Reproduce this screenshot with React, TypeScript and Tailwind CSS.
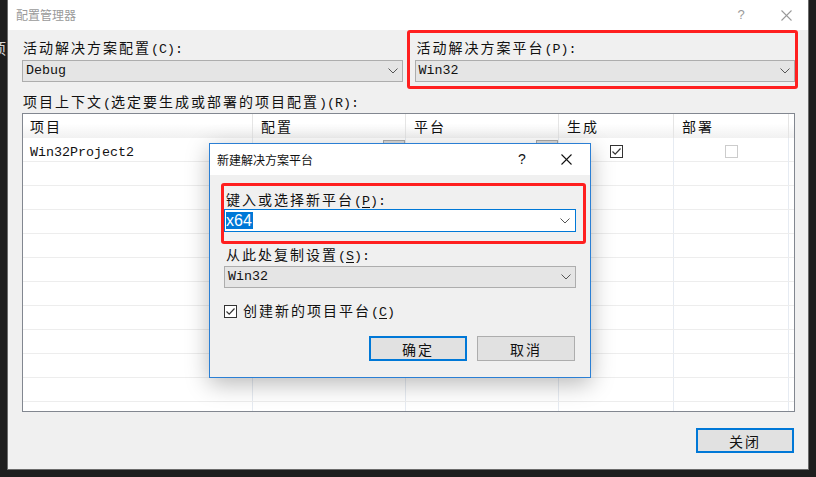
import React from "react";

const C = ({ children }: { children: React.ReactNode }) => (
  <span className="font-['Noto_Sans_CJK_SC',sans-serif] text-[14px] tracking-[2px]">{children}</span>
);
const A = ({ children, u }: { children: React.ReactNode; u?: boolean }) => (
  <span className={u ? "font-['Liberation_Mono',monospace] text-[13.33px] underline underline-offset-2" : "font-['Liberation_Mono',monospace] text-[13.33px]"}>
    {children}
  </span>
);

const Chevron = ({ color = "#555" }: { color?: string }) => (
  <svg width="10" height="6" viewBox="0 0 10 6" className="shrink-0">
    <polyline points="0.5,0.5 5,5 9.5,0.5" fill="none" stroke={color} strokeWidth="1" />
  </svg>
);

const XIcon = ({ color }: { color: string }) => (
  <svg width="11" height="11" viewBox="0 0 11 11">
    <line x1="0.5" y1="0.5" x2="10.5" y2="10.5" stroke={color} strokeWidth="1.1" />
    <line x1="10.5" y1="0.5" x2="0.5" y2="10.5" stroke={color} strokeWidth="1.1" />
  </svg>
);

const CheckBox = ({ checked, disabled }: { checked?: boolean; disabled?: boolean }) => (
  <div
    className={
      disabled
        ? "w-[13px] h-[13px] border border-[#cccccc] bg-white"
        : "w-[13px] h-[13px] border border-[#333333] bg-white flex items-center justify-center"
    }
  >
    {checked && (
      <svg width="11" height="11" viewBox="0 0 11 11">
        <polyline points="1.5,5.5 4.2,8.2 9.5,2.5" fill="none" stroke="#333" strokeWidth="1.2" />
      </svg>
    )}
  </div>
);

const Combo = ({ text }: { text: string }) => (
  <div className="h-[22px] bg-[#e5e5e5] border border-[#adadad] flex items-center pl-[3px] pr-[4px] leading-[20px] text-[#111]">
    <A>{text}</A>
    <div className="ml-auto">
      <Chevron />
    </div>
  </div>
);

const cols = "grid grid-cols-[230px_153px_153px_115px_115px]";

export default function App() {
  const emptyRows = Array.from({ length: 11 });
  return (
    <div className="relative w-[816px] h-[477px] bg-[#1e1e1e] overflow-hidden">
      <span className="absolute left-[-9px] top-[37px] text-[15px] text-[#d8d8d8] font-['Noto_Sans_CJK_SC',sans-serif]">项</span>

      {/* Main dialog */}
      <div className="absolute left-[7px] top-0 w-[802px] h-[470px] bg-[#f0f0f0] border-x border-b border-[#6b6b6b] flex flex-col">
        <div className="h-[30px] bg-white flex items-center pl-[8px] pr-[7px] shrink-0">
          <span className="font-['Noto_Sans_CJK_SC',sans-serif] text-[12px] text-[#9a9a9a]">配置管理器</span>
          <div className="ml-auto w-[30px] flex justify-center text-[13px] text-[#9a9a9a] font-['Liberation_Sans',sans-serif]">?</div>
          <div className="ml-[15px] w-[30px] flex justify-center">
            <XIcon color="#9a9a9a" />
          </div>
        </div>

        <div className="relative flex-1 pl-[14px] pr-[13px] pt-[7px] flex flex-col text-[#111]">
          <div className="grid grid-cols-2 gap-x-[12px]">
            <div>
              <div className="h-[20px] leading-[20px] pl-[1px]">
                <C>活动解决方案配置</C>
                <A>(C):</A>
              </div>
              <div className="mt-[3px]">
                <Combo text="Debug" />
              </div>
            </div>
            <div>
              <div className="h-[20px] leading-[20px] pl-[2px]">
                <C>活动解决方案平台</C>
                <A>(P):</A>
              </div>
              <div className="mt-[3px]">
                <Combo text="Win32" />
              </div>
            </div>
          </div>

          <div className="mt-[9px] h-[20px] leading-[20px] pl-[1px]">
            <C>项目上下文</C>
            <A>(</A>
            <C>选定要生成或部署的项目配置</C>
            <A>)(R):</A>
          </div>

          <div className="mt-[2px] h-[299px] bg-white border border-[#828790] overflow-hidden">
            <div className={cols + " h-[24px] bg-linear-to-b from-white from-40% to-[#f1f1f1]"}>
              {["项目", "配置", "平台", "生成", "部署"].map((h, i) => (
                <div
                  key={h}
                  className={
                    i === 0
                      ? "border-r border-[#e5e5e5] pl-[7px] leading-[24px]"
                      : "border-r border-[#e5e5e5] pl-[8px] leading-[24px]"
                  }
                >
                  <C>{h}</C>
                </div>
              ))}
            </div>
            <div className={cols + " h-[24px] border-b border-[#ededed]"}>
              <div className="border-r border-[#e6ebf2] pl-[7px] leading-[24px]">
                <A>Win32Project2</A>
              </div>
              <div className="relative border-r border-[#e6ebf2]">
                <div className="absolute right-0 top-[2px] w-[22px] h-[20px] bg-[#dadada] border border-[#a8a8a8]" />
              </div>
              <div className="relative border-r border-[#e6ebf2]">
                <div className="absolute right-0 top-[2px] w-[22px] h-[20px] bg-[#dadada] border border-[#a8a8a8]" />
              </div>
              <div className="border-r border-[#e6ebf2] flex items-center justify-center">
                <CheckBox checked />
              </div>
              <div className="border-r border-[#e6ebf2] flex items-center justify-center">
                <CheckBox disabled />
              </div>
            </div>
            {emptyRows.map((_, r) => (
              <div key={r} className={cols + " h-[24px] border-b border-[#ededed]"}>
                <div className="border-r border-[#e6ebf2]" />
                <div className="border-r border-[#e6ebf2]" />
                <div className="border-r border-[#e6ebf2]" />
                <div className="border-r border-[#e6ebf2]" />
                <div className="border-r border-[#e6ebf2]" />
              </div>
            ))}
          </div>

          <div className="mt-[16px] flex justify-end pr-[1px]">
            <button className="w-[98px] h-[25px] bg-[#e1e1e1] border-2 border-[#0078d7] flex items-center justify-center leading-[20px] text-[#111]">
              <C>关闭</C>
            </button>
          </div>

          <div className="absolute left-[399px] top-0 w-[391px] h-[59px] border-[3px] border-[#ff1f1f] rounded-[3px]" />
        </div>
      </div>

      {/* Sub dialog */}
      <div className="absolute left-[209px] top-[143px] w-[382px] h-[235px] bg-[#f0f0f0] border border-[#2b7fd4] shadow-[0_6px_22px_rgba(0,0,0,0.28)] flex flex-col">
        <div className="h-[31px] bg-white flex items-center pl-[7px] pr-[9px] shrink-0">
          <span className="font-['Noto_Sans_CJK_SC',sans-serif] text-[12px] text-[#111]">新建解决方案平台</span>
          <div className="ml-auto w-[30px] flex justify-center text-[14px] text-[#111] font-['Liberation_Sans',sans-serif]">?</div>
          <div className="ml-[14px] w-[30px] flex justify-center">
            <XIcon color="#111" />
          </div>
        </div>
        <div className="relative flex-1 px-[14px] pt-[14px] flex flex-col text-[#111]">
          <div className="h-[20px] leading-[20px] pl-[2px]">
            <C>键入或选择新平台</C>
            <A>(</A>
            <A u>P</A>
            <A>):</A>
          </div>
          <div className="h-[23px] bg-white border border-[#0078d7] flex items-center pl-[1px] pr-[5px]">
            <span className="bg-[#0078d7] text-white h-[17px] leading-[17px] font-['Liberation_Sans',sans-serif] text-[16px] pr-[1px]">x64</span>
            <div className="ml-auto">
              <Chevron />
            </div>
          </div>
          <div className="mt-[12px] h-[20px] leading-[20px] pl-[2px]">
            <C>从此处复制设置</C>
            <A>(</A>
            <A u>S</A>
            <A>):</A>
          </div>
          <div className="mt-[2px]">
            <Combo text="Win32" />
          </div>
          <div className="mt-[13px] h-[20px] flex items-center">
            <CheckBox checked />
            <div className="ml-[6px] leading-[20px]">
              <C>创建新的项目平台</C>
              <A>(</A>
              <A u>C</A>
              <A>)</A>
            </div>
          </div>
          <div className="mt-[15px] flex justify-end pr-[1px]">
            <button className="w-[98px] h-[25px] bg-[#e1e1e1] border-2 border-[#0078d7] flex items-center justify-center leading-[20px] text-[#111]">
              <C>确定</C>
            </button>
            <button className="ml-[10px] w-[98px] h-[25px] bg-[#e1e1e1] border border-[#adadad] flex items-center justify-center leading-[20px] text-[#111]">
              <C>取消</C>
            </button>
          </div>
          <div className="absolute left-[11px] top-[8px] w-[365px] h-[61px] border-[3px] border-[#ff1f1f] rounded-[3px]" />
        </div>
      </div>
    </div>
  );
}
